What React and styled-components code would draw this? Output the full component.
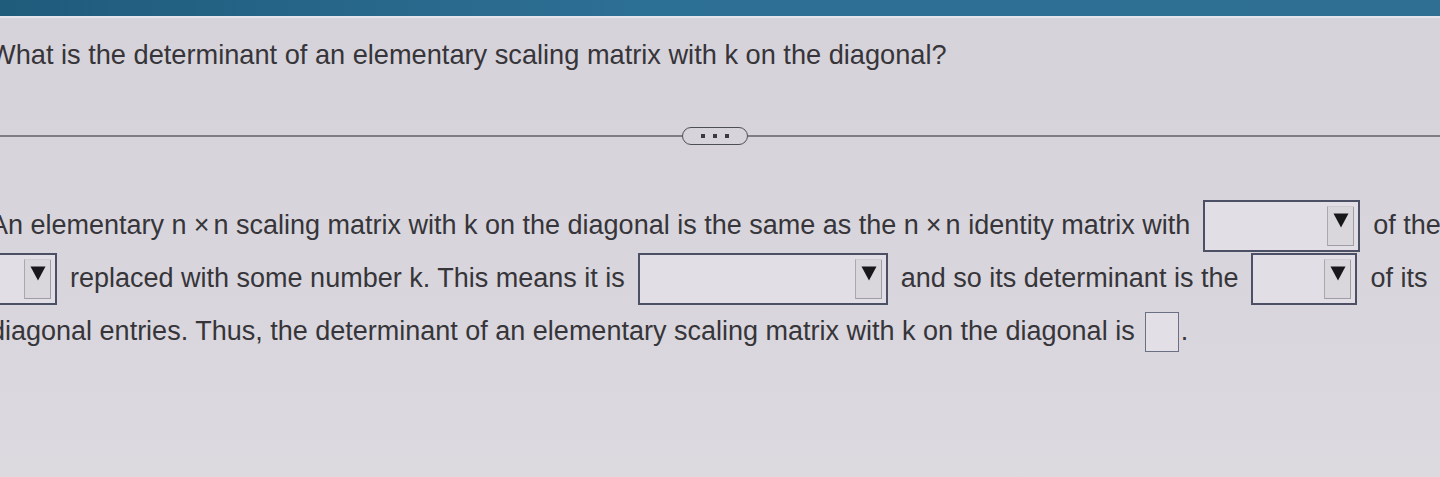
import styled, { createGlobalStyle } from "styled-components";

const GlobalStyle = createGlobalStyle`
  html, body {
    margin: 0;
    padding: 0;
  }
  body {
    background: #d8d4dc;
    overflow: hidden;
    font-family: "Liberation Sans", Arial, sans-serif;
  }
`;

const Page = styled.div`
  width: 1440px;
  height: 477px;
  overflow: hidden;
  background: linear-gradient(180deg, #d6d2da 0%, #d9d5dd 60%, #dcd9df 100%);
  color: #363539;
`;

const TopBar = styled.div`
  height: 16px;
  background: linear-gradient(90deg, #1f5b7b 0%, #2d7095 45%, #2e6f93 100%);
  border-bottom: 2px solid #e4e4ec;
`;

const Content = styled.div`
  margin-left: -10px;
  padding-top: 21px;
`;

const Question = styled.p`
  margin: 0;
  font-size: 27.2px;
  line-height: 31px;
  white-space: nowrap;
`;

const Divider = styled.div`
  display: flex;
  align-items: center;
  margin-top: 57px;
  height: 18px;

  .rule {
    flex: 1;
    height: 1.5px;
    background: #7e7d84;
  }
`;

const MoreButton = styled.button`
  width: 66px;
  height: 18px;
  padding: 0;
  border: 1.5px solid #4e4e56;
  border-radius: 10px;
  background: transparent;
  display: flex;
  align-items: center;
  justify-content: center;
  gap: 8px;

  span {
    width: 4px;
    height: 4px;
    background: #3a3a40;
  }
`;

const Paragraph = styled.div`
  display: flex;
  flex-direction: column;
  margin-top: 54px;
`;

const Line = styled.div`
  display: flex;
  align-items: center;
  height: 53px;
  gap: ${(props) => props.gap || "13px"};
  font-size: 27px;
  white-space: nowrap;
`;

const Times = styled.span`
  margin: 0 4px 0 7px;
`;

const Select = styled.div`
  flex: none;
  box-sizing: border-box;
  width: ${(props) => props.width}px;
  height: 52px;
  border: 2px solid #4b5064;
  background: #e1dfe5;
  display: flex;
  justify-content: flex-end;
  padding: 4px;
`;

const ArrowButton = styled.div`
  box-sizing: border-box;
  width: 27px;
  height: 100%;
  background: #d9d7dc;
  border-left: 1px solid #a9a8ae;
  border-top: 1px solid #cfcdd2;
  box-shadow: inset -1px -1px 0 #9e9da4;
  display: flex;
  justify-content: center;
  padding-top: 6px;
`;

const AnswerBox = styled.div`
  flex: none;
  box-sizing: border-box;
  width: 34px;
  height: 40px;
  border: 1.5px solid #6b7083;
  background: #e2e0e6;
`;

const Period = styled.span`
  margin-left: -8px;
`;

const Dropdown = ({ width }) => (
  <Select width={width}>
    <ArrowButton>
      <svg width="16" height="15" viewBox="0 0 16 15">
        <polygon points="0.5,0.5 15.5,0.5 8,14.5" fill="#18181b" />
      </svg>
    </ArrowButton>
  </Select>
);

const NxN = () => (
  <span>
    n<Times>×</Times>n
  </span>
);

const App = () => {
  return (
    <Page>
      <GlobalStyle />
      <TopBar />
      <Content>
        <Question>
          What is the determinant of an elementary scaling matrix with k on the diagonal?
        </Question>
        <Divider>
          <div className="rule" />
          <MoreButton>
            <span />
            <span />
            <span />
          </MoreButton>
          <div className="rule" />
        </Divider>
        <Paragraph>
          <Line>
            <span>
              An elementary <NxN /> scaling matrix with k on the diagonal is the same as the{" "}
              <NxN /> identity matrix with
            </span>
            <Dropdown width={157} />
            <span>of the</span>
          </Line>
          <Line>
            <Dropdown width={67} />
            <span>replaced with some number k. This means it is</span>
            <Dropdown width={250} />
            <span>and so its determinant is the</span>
            <Dropdown width={106} />
            <span>of its</span>
          </Line>
          <Line gap="10px">
            <span>
              diagonal entries. Thus, the determinant of an elementary scaling matrix with k on
              the diagonal is
            </span>
            <AnswerBox />
            <Period>.</Period>
          </Line>
        </Paragraph>
      </Content>
    </Page>
  );
};

export default App;
